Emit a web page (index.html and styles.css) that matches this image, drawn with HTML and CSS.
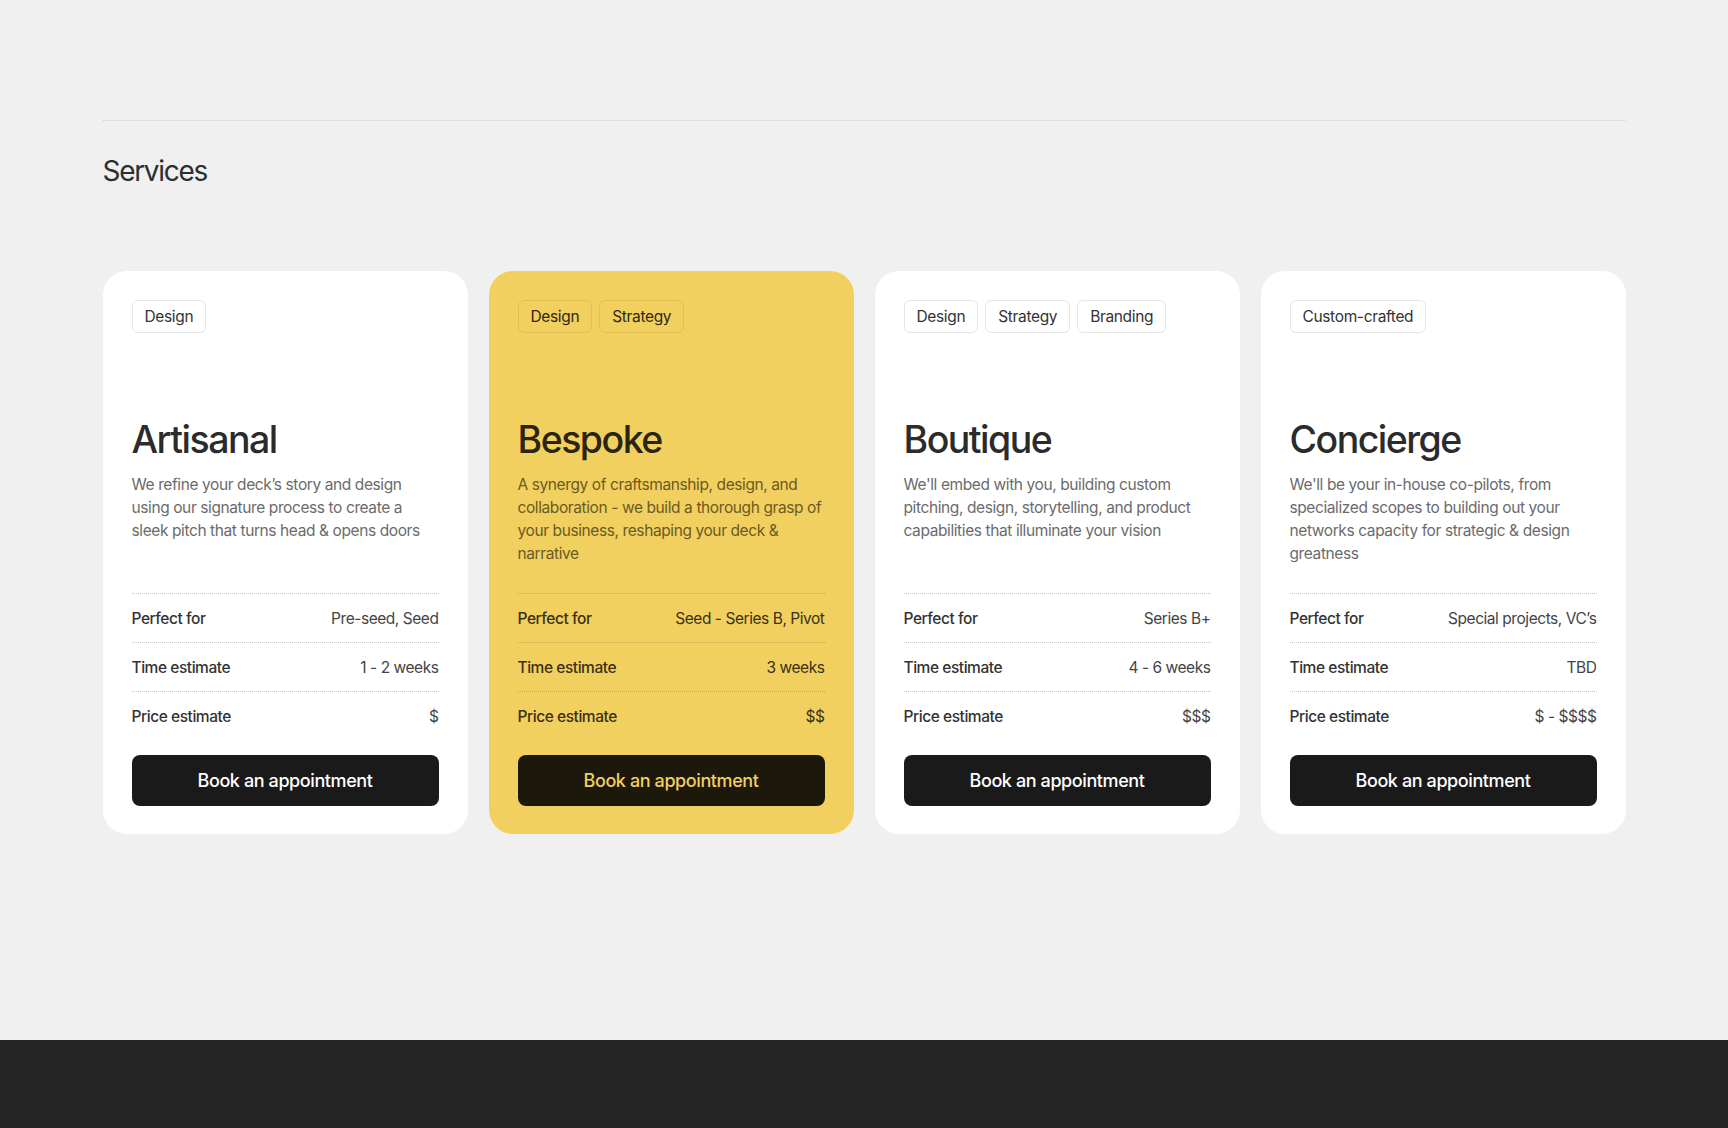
FILE: index.html
```html
<!DOCTYPE html>
<html lang="en">
<head>
<meta charset="utf-8">
<title>Services</title>
<link rel="stylesheet" href="styles.css">
</head>
<body>
<main class="page">
  <section class="services">
    <h2 class="services-title">Services</h2>
    <div class="cards">
      <article class="card">
        <div class="tags"><span class="tag">Design</span></div>
        <h3 class="card-title">Artisanal</h3>
        <p class="card-desc">We refine your deck’s story and design using our signature process to create a sleek pitch that turns head &amp; opens doors</p>
        <dl class="facts">
          <div class="fact"><dt>Perfect for</dt><dd>Pre-seed, Seed</dd></div>
          <div class="fact"><dt>Time estimate</dt><dd>1 - 2 weeks</dd></div>
          <div class="fact"><dt>Price estimate</dt><dd>$</dd></div>
        </dl>
        <a class="btn" href="#">Book an appointment</a>
      </article>
      <article class="card card-featured">
        <div class="tags"><span class="tag">Design</span><span class="tag">Strategy</span></div>
        <h3 class="card-title">Bespoke</h3>
        <p class="card-desc">A synergy of craftsmanship, design, and collaboration - we build a thorough grasp of your business, reshaping your deck &amp; narrative</p>
        <dl class="facts">
          <div class="fact"><dt>Perfect for</dt><dd>Seed - Series B, Pivot</dd></div>
          <div class="fact"><dt>Time estimate</dt><dd>3 weeks</dd></div>
          <div class="fact"><dt>Price estimate</dt><dd>$$</dd></div>
        </dl>
        <a class="btn" href="#">Book an appointment</a>
      </article>
      <article class="card">
        <div class="tags"><span class="tag">Design</span><span class="tag">Strategy</span><span class="tag">Branding</span></div>
        <h3 class="card-title">Boutique</h3>
        <p class="card-desc">We'll embed with you, building custom pitching, design, storytelling, and product capabilities that illuminate your vision</p>
        <dl class="facts">
          <div class="fact"><dt>Perfect for</dt><dd>Series B+</dd></div>
          <div class="fact"><dt>Time estimate</dt><dd>4 - 6 weeks</dd></div>
          <div class="fact"><dt>Price estimate</dt><dd>$$$</dd></div>
        </dl>
        <a class="btn" href="#">Book an appointment</a>
      </article>
      <article class="card">
        <div class="tags"><span class="tag">Custom-crafted</span></div>
        <h3 class="card-title">Concierge</h3>
        <p class="card-desc">We'll be your in-house co-pilots, from specialized scopes to building out your networks capacity for strategic &amp; design greatness</p>
        <dl class="facts">
          <div class="fact"><dt>Perfect for</dt><dd>Special projects, VC’s</dd></div>
          <div class="fact"><dt>Time estimate</dt><dd>TBD</dd></div>
          <div class="fact"><dt>Price estimate</dt><dd>$ - $$$$</dd></div>
        </dl>
        <a class="btn" href="#">Book an appointment</a>
      </article>
    </div>
  </section>
</main>
<footer class="footer"></footer>
</body>
</html>
```
FILE: styles.css
```css
* { box-sizing: border-box; }

html, body {
  margin: 0;
  padding: 0;
}

body {
  background: #f0f0f0;
  font-family: Inter, "Noto Sans", "Liberation Sans", sans-serif;
  color: #2b2b2b;
  -webkit-font-smoothing: antialiased;
}

.page {
  height: 1040px;
  padding-top: 120px;
}

.services {
  width: 1523px;
  margin: 0 auto;
  border-top: 1px dotted #cfcfcf;
}

.services-title {
  margin: 33px 0 0;
  font-size: 28px;
  font-weight: 400;
  line-height: 34px;
  color: #2e2e2e;
  letter-spacing: -1.3px;
}

.cards {
  margin-top: 83px;
  display: grid;
  grid-template-columns: repeat(4, 1fr);
  gap: 21px;
}

.card {
  background: #ffffff;
  border-radius: 24px;
  padding: 29px 29px 28px;
  display: flex;
  flex-direction: column;
}

.tags {
  display: flex;
  gap: 7px;
}

.tag {
  height: 33px;
  line-height: 31px;
  padding: 0 12px;
  border: 1px solid #e6e6e6;
  border-radius: 6px;
  font-size: 15.5px;
  letter-spacing: -0.35px;
  color: #333;
}

.card-title {
  margin: 84px 0 0;
  font-size: 37.5px;
  line-height: 46px;
  font-weight: 500;
  letter-spacing: -1.5px;
  color: #2b2b2b;
}

.card-desc {
  margin: 10px 0 28px;
  flex: 1;
  font-size: 15.5px;
  line-height: 23px;
  color: #6b6b6b;
  letter-spacing: -0.4px;
}

.facts {
  margin: 0;
}

.fact {
  display: flex;
  justify-content: space-between;
  align-items: center;
  height: 49px;
  border-top: 1px dotted #c4c4c4;
  font-size: 15.5px;
  letter-spacing: -0.45px;
}

.fact dt {
  font-weight: 500;
  color: #333;
}

.fact dd {
  margin: 0;
  color: #444;
}

.btn {
  margin-top: 15px;
  display: flex;
  align-items: center;
  justify-content: center;
  height: 51px;
  border-radius: 8px;
  background: #1a1a1a;
  color: #ffffff;
  font-size: 18px;
  font-weight: 500;
  letter-spacing: -0.4px;
  text-decoration: none;
}

.card-featured {
  background: #f2d060;
}

.card-featured .tag {
  border-color: rgba(120, 90, 0, 0.14);
  color: #2e2712;
}

.card-featured .card-title {
  color: #2a2410;
}

.card-featured .card-desc {
  color: #6b5a22;
}

.card-featured .fact {
  border-top-color: rgba(90, 70, 0, 0.3);
}

.card-featured .fact dt,
.card-featured .fact dd {
  color: #3a3114;
}

.card-featured .btn {
  background: #1c180b;
  color: #f2d060;
}

.footer {
  height: 88px;
  background: #262626;
}
```
